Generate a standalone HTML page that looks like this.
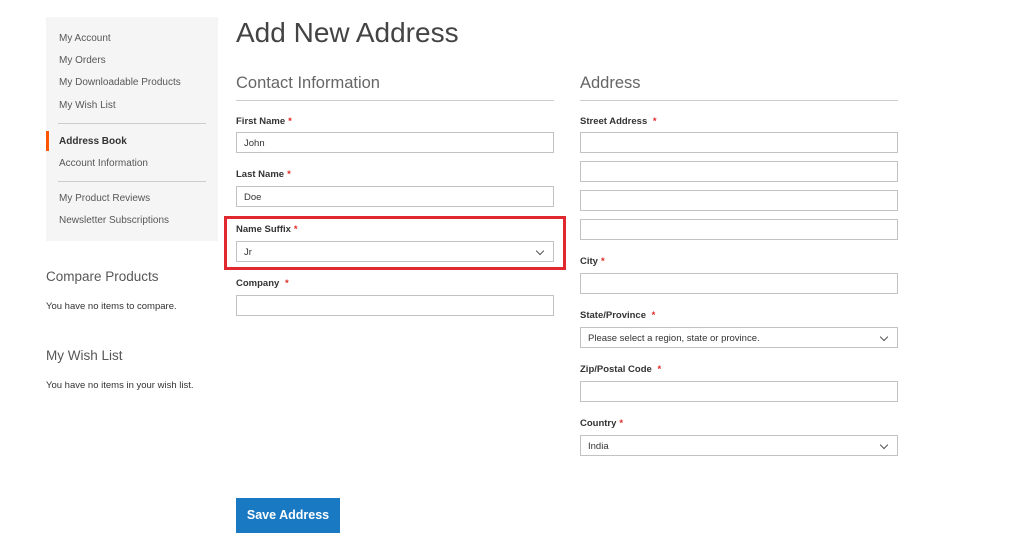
<!DOCTYPE html>
<html><head><style>
*{margin:0;padding:0;box-sizing:border-box}
body{width:1024px;height:543px;background:#fff;font-family:"Liberation Sans",sans-serif;color:#333;position:relative;overflow:hidden}
.a{position:absolute;white-space:nowrap}
.side{left:46px;top:17px;width:172px;height:224px;background:#f5f5f5}
.nav{font-size:10px;color:#575757;left:59px}
.hr{position:absolute;height:1px;background:#ccc}
.lbl{font-size:9.5px;font-weight:bold;color:#333}
.lbl b{color:#e02b27;margin-left:3px}
.in{position:absolute;height:21px;border:1px solid #c2c2c2;background:#fff;font-size:9.5px;padding:5px 7px;color:#333}
.sel::after{content:"";position:absolute;right:10px;top:6px;width:5px;height:5px;border-right:1.2px solid #555;border-bottom:1.2px solid #555;transform:rotate(45deg)}
.l{left:236px;width:318px}.r{left:580px;width:318px}
</style></head><body>
<div class="a side"></div>
<div class="a nav" style="top:33px">My Account</div>
<div class="a nav" style="top:55px">My Orders</div>
<div class="a nav" style="top:77px">My Downloadable Products</div>
<div class="a nav" style="top:100px">My Wish List</div>
<div class="hr" style="left:58px;top:123px;width:148px"></div>
<div class="a" style="left:46px;top:131px;width:3px;height:20px;background:#ff5501"></div>
<div class="a nav" style="top:136px;font-weight:bold;color:#333">Address Book</div>
<div class="a nav" style="top:158px">Account Information</div>
<div class="hr" style="left:58px;top:181px;width:148px"></div>
<div class="a nav" style="top:193px">My Product Reviews</div>
<div class="a nav" style="top:215px">Newsletter Subscriptions</div>
<div class="a" style="left:46px;top:269px;font-size:13.5px;color:#575757">Compare Products</div>
<div class="a" style="left:46px;top:301px;font-size:9.5px">You have no items to compare.</div>
<div class="a" style="left:46px;top:348px;font-size:13.5px;color:#575757">My Wish List</div>
<div class="a" style="left:46px;top:380px;font-size:9.5px">You have no items in your wish list.</div>

<div class="a" style="left:236px;top:17px;font-size:28px;color:#444">Add New Address</div>
<div class="a" style="left:236px;top:74px;font-size:16.5px;color:#666">Contact Information</div>
<div class="hr" style="left:236px;top:100px;width:318px;background:#ccc"></div>
<div class="a" style="left:580px;top:74px;font-size:16.5px;color:#666">Address</div>
<div class="hr" style="left:580px;top:100px;width:318px;background:#ccc"></div>

<div class="a lbl" style="left:236px;top:116px">First Name<b>*</b></div>
<div class="in l" style="top:132px">John</div>
<div class="a lbl" style="left:236px;top:169px">Last Name<b>*</b></div>
<div class="in l" style="top:186px">Doe</div>
<div class="a" style="left:224px;top:216px;width:342px;height:54px;border:3px solid #e0282f"></div>
<div class="a lbl" style="left:236px;top:224px">Name Suffix<b>*</b></div>
<div class="in l sel" style="top:241px">Jr</div>
<div class="a lbl" style="left:236px;top:278px">Company <b>*</b></div>
<div class="in l" style="top:295px"></div>

<div class="a lbl" style="left:580px;top:116px">Street Address <b>*</b></div>
<div class="in r" style="top:132px"></div>
<div class="in r" style="top:161px"></div>
<div class="in r" style="top:190px"></div>
<div class="in r" style="top:219px"></div>
<div class="a lbl" style="left:580px;top:256px">City<b>*</b></div>
<div class="in r" style="top:273px"></div>
<div class="a lbl" style="left:580px;top:310px">State/Province <b>*</b></div>
<div class="in r sel" style="top:327px">Please select a region, state or province.</div>
<div class="a lbl" style="left:580px;top:364px">Zip/Postal Code <b>*</b></div>
<div class="in r" style="top:381px"></div>
<div class="a lbl" style="left:580px;top:418px">Country<b>*</b></div>
<div class="in r sel" style="top:435px">India</div>

<div class="a" style="left:236px;top:498px;width:104px;height:35px;background:#1979c3;color:#fff;font-weight:bold;font-size:12.5px;text-align:center;line-height:35px">Save Address</div>
</body></html>
